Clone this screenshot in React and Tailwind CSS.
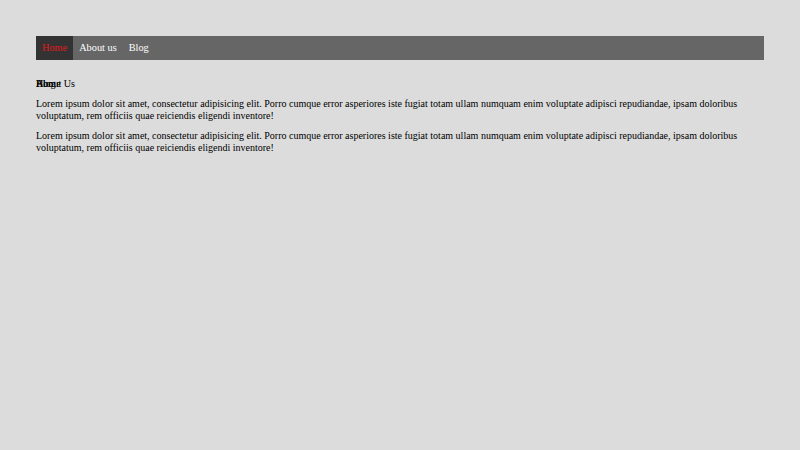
import React, { useState } from 'react'

const lorem =
  'Lorem ipsum dolor sit amet, consectetur adipisicing elit. Porro cumque error asperiores iste fugiat totam ullam numquam enim voluptate adipisci repudiandae, ipsam doloribus voluptatum, rem officiis quae reiciendis eligendi inventore!'

const tabs = ['Home', 'About us', 'Blog']

export default function App() {
  const [active, setActive] = useState('Home')

  return (
    <div
      className="min-h-[450px] w-full bg-[#dcdcdc] px-[36px] pt-[36px] text-[10px] leading-[12px] text-black"
      style={{ fontFamily: '"Liberation Serif", "Times New Roman", serif' }}
    >
      {/* nav */}
      <nav className="flex h-[24px] items-stretch bg-[#666666]">
        {tabs.map((t) => (
          <button
            key={t}
            onClick={() => setActive(t)}
            className={`flex items-center px-[6px] text-[10.3px] ${
              active === t ? 'bg-[#333333] text-[#e0191b]' : 'text-white'
            }`}
          >
            {t}
          </button>
        ))}
      </nav>

      {/* pages stacked on each other */}
      <div className="mt-[18px] grid">
        <h1 className="col-start-1 row-start-1 text-[10.1px] font-normal">Home</h1>
        <h1 className="col-start-1 row-start-1 text-[10.1px] font-normal">About Us</h1>
        <h1 className="col-start-1 row-start-1 text-[10.1px] font-normal">Blog</h1>
      </div>

      <div className="mt-[8px] flex flex-col gap-[8px]">
        <p>{lorem}</p>
        <p>{lorem}</p>
      </div>
    </div>
  )
}
